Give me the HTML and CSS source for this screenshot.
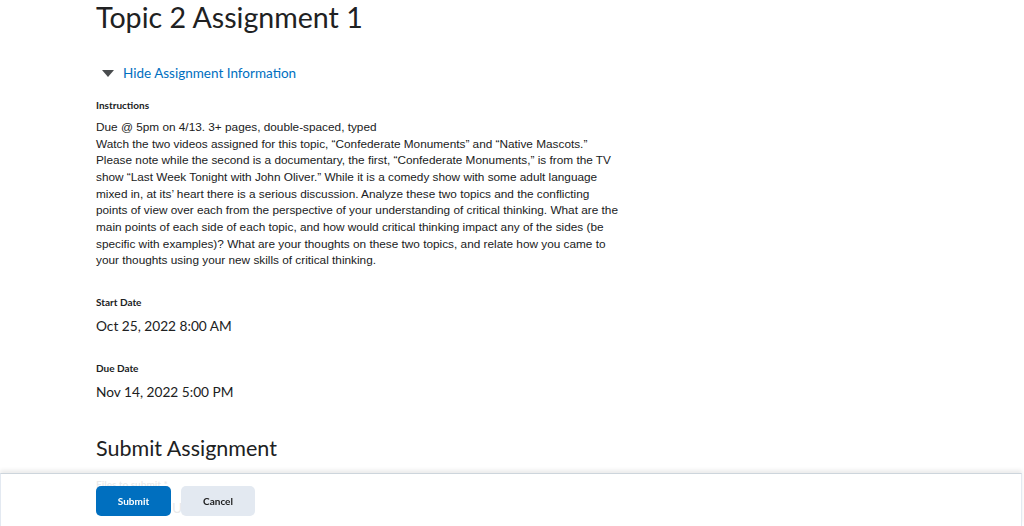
FILE: index.html
```html
<!DOCTYPE html>
<html lang="en">
<head>
<meta charset="UTF-8">
<meta name="viewport" content="width=device-width, initial-scale=1.0">
<title>Topic 2 Assignment 1</title>
<link rel="stylesheet" href="styles.css">
</head>
<body>

<div class="page">
    <h1 class="title">Topic 2 Assignment 1</h1>

    <div class="toggle">
        <span class="caret"></span>
        <a href="#">Hide Assignment Information</a>
    </div>

    <div class="field">
        <div class="label">Instructions</div>
        <div class="instructions">
            <p>Due @ 5pm on 4/13. 3+ pages, double-spaced, typed</p>
            <p>Watch the two videos assigned for this topic, “Confederate Monuments” and “Native Mascots.” Please note while the second is a documentary, the first, “Confederate Monuments,” is from the TV show “Last Week Tonight with John Oliver.” While it is a comedy show with some adult language mixed in, at its’ heart there is a serious discussion. Analyze these two topics and the conflicting points of view over each from the perspective of your understanding of critical thinking. What are the main points of each side of each topic, and how would critical thinking impact any of the sides (be specific with examples)? What are your thoughts on these two topics, and relate how you came to your thoughts using your new skills of critical thinking.</p>
        </div>
    </div>

    <div class="field date-field">
        <div class="label">Start Date</div>
        <div class="value">Oct 25, 2022 8:00 AM</div>
    </div>

    <div class="field date-field">
        <div class="label">Due Date</div>
        <div class="value">Nov 14, 2022 5:00 PM</div>
    </div>

    <h2 class="section-title">Submit Assignment</h2>

    <div class="label files-label">Files to submit *</div>
    <div class="upload-row">
        <span class="upload-text">Upload</span>
    </div>
</div>

<!-- Sticky button bar -->
<div class="footer">
    <button class="btn primary">Submit</button>
    <button class="btn secondary">Cancel</button>
</div>

</body>
</html>
```

FILE: styles.css
```css
body {
    margin: 0;
    background-color: #ffffff;
    font-family: Lato, "Noto Sans", sans-serif;
    color: #202122;
}
.page {
    padding: 0 0 80px 96px;
}
.title {
    font-size: 28.6px;
    font-weight: 400;
    line-height: 34px;
    margin: 0;
}
.toggle {
    display: flex;
    align-items: center;
    margin-top: 30px;
    height: 18px;
}
.caret {
    width: 0;
    height: 0;
    border-left: 6px solid transparent;
    border-right: 6px solid transparent;
    border-top: 7px solid #494c4e;
    margin-left: 6px;
    margin-right: 9px;
    margin-top: 1px;
}
.toggle a {
    color: #006fbf;
    text-decoration: none;
    font-size: 13.5px;
}
.field {
    margin-top: 16px;
}
.label {
    font-size: 10px;
    font-weight: 700;
    line-height: 14px;
    color: #202122;
}
.instructions {
    font-family: "Liberation Sans", Arial, sans-serif;
    font-size: 11.8px;
    line-height: 16.65px;
    width: 524px;
    margin-top: 7px;
}
.instructions p {
    margin: 0;
}
.date-field {
    margin-top: 26px;
}
.date-field + .date-field {
    margin-top: 25px;
}
.value {
    font-size: 13.7px;
    line-height: 20px;
    margin-top: 7px;
}
.section-title {
    font-size: 21.5px;
    font-weight: 400;
    line-height: 28px;
    margin: 32px 0 0;
}
.files-label {
    margin-top: 15px;
    color: #494c4e;
}
.upload-row {
    margin-top: 6px;
    padding-left: 76px;
}
.upload-text {
    font-size: 14px;
    color: #494c4e;
}
/* Bottom button bar */
.footer {
    position: fixed;
    left: 0;
    right: 2px;
    bottom: 0;
    height: 53px;
    padding: 12px 0 0 95px;
    box-sizing: border-box;
    display: flex;
    align-items: flex-start;
    gap: 10px;
    background-color: rgba(255, 255, 255, 0.88);
    border-top: 1px solid #cdd5dc;
    border-left: 1px solid #e3e9f1;
    border-right: 1px solid #e3e9f1;
    box-shadow: 0 -3px 4px rgba(0, 0, 0, 0.08);
}
.btn {
    font-family: Lato, "Noto Sans", sans-serif;
    font-size: 10px;
    font-weight: 700;
    height: 30px;
    width: 75px;
    border: none;
    border-radius: 5px;
    cursor: pointer;
}
.primary {
    background-color: #006fbf;
    color: #ffffff;
}
.secondary {
    background-color: #e3e9f1;
    color: #202122;
    width: 74px;
}
```
